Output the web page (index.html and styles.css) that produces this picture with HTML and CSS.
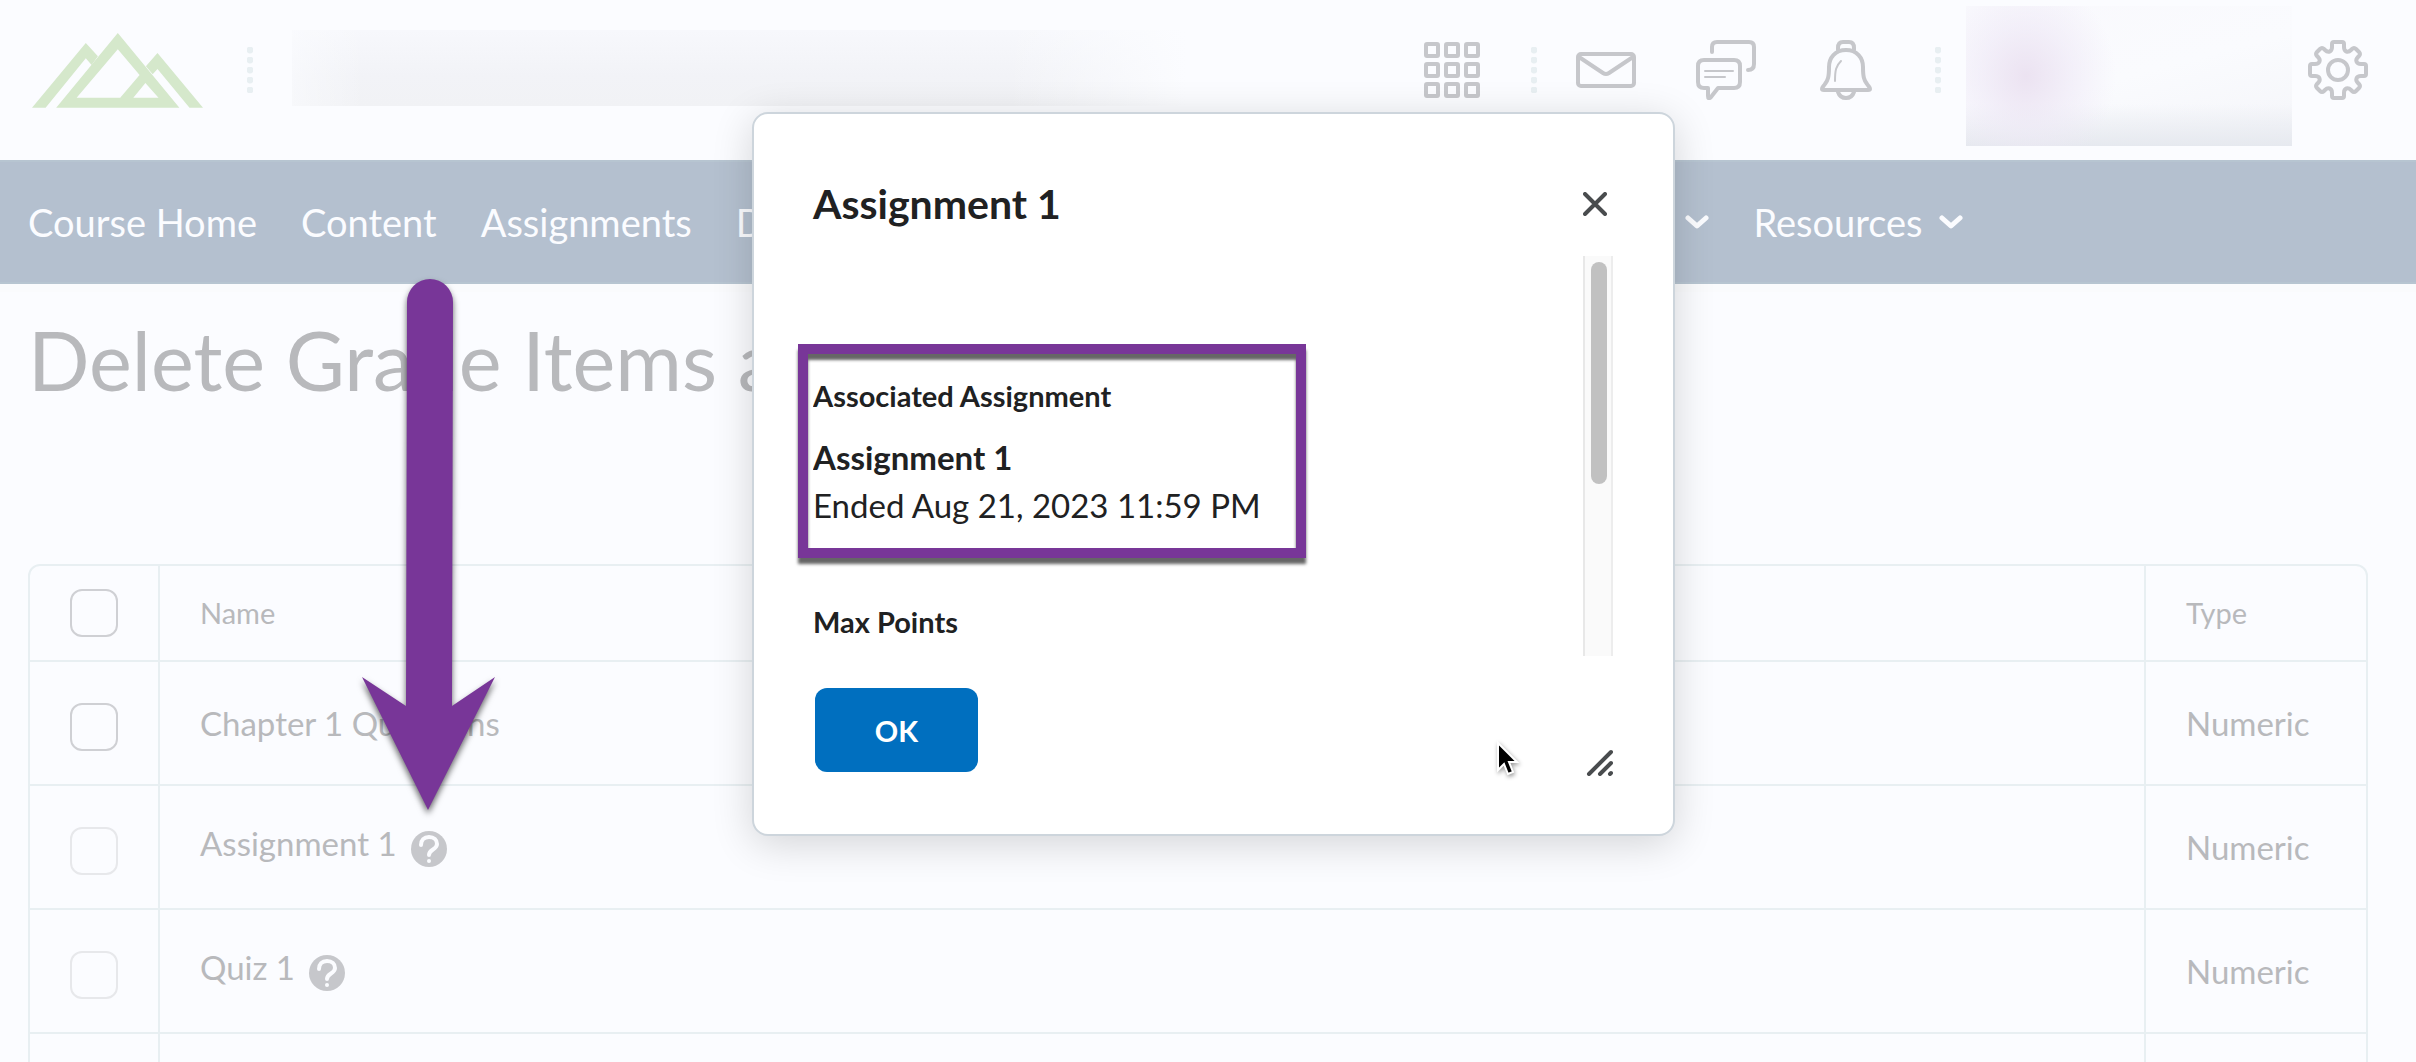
FILE: index.html
```html
<!DOCTYPE html>
<html lang="en">
<head>
    <meta charset="UTF-8">
    <meta name="viewport" content="width=device-width, initial-scale=1.0">
    <title>Delete Grade Items and Categories</title>
    <link rel="stylesheet" href="styles.css">
</head>
<body>
<div class="page">
    <header class="header">
        <a class="logo" href="#" aria-label="Home">
            <svg width="171" height="75" viewBox="32 32 171 75" fill="#d5e8cb">
                <path fill-rule="evenodd" d="M117.8 32L179.4 106.8H56.2ZM117.8 48.3L76.6 96.7H120.2L139.6 74ZM145.4 82L133.3 96.7H158.5Z"/>
                <path d="M32 106.8L85.8 42L97.9 55.3L91.6 64L85.8 57.3L45.6 106.8Z"/>
                <path d="M145.9 65.3L157.5 52L203 106.8H189.5L157.5 68L152.7 73.3Z"/>
            </svg>
        </a>
        <span class="divider divider-logo"></span>
        <div class="course-name"></div>

        <div class="tools">
            <button class="tool" aria-label="Courses">
                <svg width="56" height="56" viewBox="0 0 56 56">
                    <rect x="2" y="2" width="12" height="12" rx="1"/><rect x="22" y="2" width="12" height="12" rx="1"/><rect x="42" y="2" width="12" height="12" rx="1"/>
                    <rect x="2" y="22" width="12" height="12" rx="1"/><rect x="22" y="22" width="12" height="12" rx="1"/><rect x="42" y="22" width="12" height="12" rx="1"/>
                    <rect x="2" y="42" width="12" height="12" rx="1"/><rect x="22" y="42" width="12" height="12" rx="1"/><rect x="42" y="42" width="12" height="12" rx="1"/>
                </svg>
            </button>
            <span class="divider divider-apps"></span>
            <button class="tool" aria-label="Messages">
                <svg width="60" height="36" viewBox="0 0 60 36">
                    <rect x="2" y="2" width="56" height="32" rx="3"/>
                    <path d="M3 5L27 21Q30 23 33 21L57 5"/>
                </svg>
            </button>
            <button class="tool" aria-label="Discussions">
                <svg width="60" height="60" viewBox="0 0 60 60">
                    <path d="M16 12V7Q16 2 21 2H53Q58 2 58 7V24Q58 30 52 30"/>
                    <path d="M12 48H8Q2 48 2 42V26Q2 20 8 20H38Q44 20 44 26V42Q44 48 38 48H22L15 57Q12 60 12 56Z"/>
                    <path class="thin" d="M9 31H37M9 37H29"/>
                </svg>
            </button>
            <button class="tool" aria-label="Notifications">
                <svg width="52" height="60" viewBox="0 0 52 60">
                    <path d="M18 10V8Q18 2 23 2H29Q34 2 34 8V10"/>
                    <path d="M26 10C15 10 9 18 9 27C9 37 8 40 5 44C3 47 2 47 2 49Q2 50 4 50H48Q50 50 50 49C50 47 49 47 47 44C44 40 43 37 43 27C43 18 37 10 26 10Z"/>
                    <path d="M18 52Q20 58 26 58T34 52"/>
                    <path class="thin" d="M21 21C16 26 15 30 15 41"/>
                </svg>
            </button>
            <span class="divider"></span>
            <div class="user"></div>
            <button class="tool tool-admin" aria-label="Settings">
                <svg width="60" height="60" viewBox="0 0 60 60">
                    <path id="teeth" d="M30 2H34Q36 2 36 4V7C36 12 40 13 43 10L44 9Q46 7 48 9L51 12Q53 14 51 16L50 17C47 20 48 24 53 24H56Q58 24 58 26V30"/>
                    <use href="#teeth" transform="rotate(90 30 30)"/>
                    <use href="#teeth" transform="rotate(180 30 30)"/>
                    <use href="#teeth" transform="rotate(270 30 30)"/>
                    <circle cx="30" cy="30" r="10"/>
                </svg>
            </button>
        </div>
    </header>

    <nav class="navbar">
        <a href="#">Course Home</a>
        <a href="#">Content</a>
        <a href="#">Assignments</a>
        <a href="#">Discussions</a>
        <a class="menu menu-first" href="#" aria-label="More">
            <svg width="24" height="14" viewBox="0 0 24 14"><path d="M3 3L12 11L21 3"/></svg>
        </a>
        <a class="menu" href="#">Resources
            <svg width="24" height="14" viewBox="0 0 24 14"><path d="M3 3L12 11L21 3"/></svg>
        </a>
    </nav>

    <main class="main">
        <h1>Delete Grade Items and Categories</h1>
        <table class="grades">
            <thead>
                <tr>
                    <th class="check"><input type="checkbox" aria-label="Select all"></th>
                    <th>Name</th>
                    <th class="type">Type</th>
                </tr>
            </thead>
            <tbody>
                <tr>
                    <td class="check"><input type="checkbox" aria-label="Select Chapter 1 Questions"></td>
                    <td>Chapter 1 Questions</td>
                    <td>Numeric</td>
                </tr>
                <tr>
                    <td class="check"><input type="checkbox" aria-label="Select Assignment 1" disabled></td>
                    <td class="with-help">Assignment 1<button class="help" aria-label="Help"><svg width="36" height="36" viewBox="0 0 36 36"><circle cx="18" cy="18" r="18"/><path d="M10 14C10 9 13 6 18 6C23 6 26 9 26 13C26 19 18 18 18 24"/><circle class="dot" cx="18" cy="30" r="2"/></svg></button></td>
                    <td>Numeric</td>
                </tr>
                <tr>
                    <td class="check"><input type="checkbox" aria-label="Select Quiz 1" disabled></td>
                    <td class="with-help">Quiz 1<button class="help" aria-label="Help"><svg width="36" height="36" viewBox="0 0 36 36"><circle cx="18" cy="18" r="18"/><path d="M10 14C10 9 13 6 18 6C23 6 26 9 26 13C26 19 18 18 18 24"/><circle class="dot" cx="18" cy="30" r="2"/></svg></button></td>
                    <td>Numeric</td>
                </tr>
                <tr>
                    <td class="check"></td>
                    <td></td>
                    <td></td>
                </tr>
            </tbody>
        </table>
    </main>

    <div class="dialog" role="dialog" aria-labelledby="dialogTitle">
        <div class="dialog-header">
            <h2 id="dialogTitle">Assignment 1</h2>
            <button class="close" aria-label="Close">
                <svg width="24" height="24" viewBox="0 0 24 24"><path d="M2 2L22 22M22 2L2 22"/></svg>
            </button>
        </div>
        <div class="dialog-body">
            <div class="details">
                <h3>Associated Assignment</h3>
                <p><strong>Assignment 1</strong></p>
                <p>Ended Aug 21, 2023 11:59 PM</p>
                <h3 class="points">Max Points</h3>
            </div>
            <div class="scrollbar"><div class="thumb"></div></div>
        </div>
        <div class="dialog-footer">
            <button class="ok">OK</button>
            <svg class="resize" width="28" height="28" viewBox="0 0 28 28"><path d="M4 26L26 4M15 26L26 15M25 26L26 25"/></svg>
        </div>
        <div class="highlight"></div>
        <svg class="cursor" width="28" height="42" viewBox="0 0 28 42">
            <path d="M3 3V30L9 24L13 34L18 32L14 22H22Z"/>
        </svg>
    </div>

    <svg class="arrow" width="140" height="550" viewBox="0 0 140 550">
        <path d="M49 25A23 23 0 0 1 95 25L94 429L137 400L70 533L4 400L48 429Z"/>
    </svg>
</div>
</body>
</html>
```
FILE: styles.css
```css
* {
    box-sizing: border-box;
}

body {
    margin: 0;
    font-family: Lato, 'Open Sans', sans-serif;
    font-size: 33px;
    line-height: 48px;
    color: #b8b9bc;
    background-color: #fbfcff;
}

button {
    padding: 0;
    border: none;
    background: none;
    font-family: inherit;
    cursor: pointer;
}

svg {
    display: block;
    flex: none;
}

.page {
    position: relative;
    height: 100vh;
    overflow: hidden;
}

/* header */
.header {
    display: flex;
    align-items: center;
    height: 160px;
    padding: 0 48px 0 32px;
}

.logo {
    margin-bottom: 20px;
}

.divider {
    flex: none;
    width: 6px;
    height: 46px;
    margin: 0 25px 20px 29px;
    background: radial-gradient(circle at 3px 3px, #e8eff2 3px, transparent 4px) 0 0 / 6px 10px;
}

.divider-logo {
    margin: 0 39px 20px 44px;
}

.divider-apps {
    margin: 0 9px 20px 19px;
}

.course-name {
    flex: 0 1 894px;
    height: 76px;
    margin-bottom: 24px;
    background: linear-gradient(90deg, rgba(251, 252, 255, 0.6), transparent 8%, transparent 80%, #fbfcff), linear-gradient(#f7f8fc, #f2f3f7 60%, #f1f2f5);
}

.tools {
    display: flex;
    align-items: center;
    margin-left: auto;
}

.tool {
    display: flex;
    justify-content: center;
    width: 120px;
    margin-bottom: 20px;
}

.tool svg {
    fill: none;
    stroke: #c6c7cb;
    stroke-width: 4;
    stroke-linecap: round;
    stroke-linejoin: round;
}

.tool .thin {
    stroke-width: 2;
}

.tool-admin {
    width: 60px;
    margin-left: 16px;
}

.user {
    width: 326px;
    height: 140px;
    margin-bottom: 8px;
    background:
        radial-gradient(ellipse 90px 100px at 60px 70px, rgba(234, 224, 240, 0.9), rgba(238, 232, 246, 0.6) 50%, transparent),
        linear-gradient(transparent 70%, #e6e9ef),
        linear-gradient(165deg, #f9f9fd, #fafbfe 50%, #f4f5f9);
}

/* navbar */
.navbar {
    display: flex;
    align-items: center;
    gap: 44px;
    height: 124px;
    padding: 0 28px;
    border-top: 2px solid #b7c5d1;
    border-bottom: 2px solid #b7c5d1;
    background-color: #b4c0cf;
    box-shadow: 0 8px 0 #fafbfd;
    font-size: 38px;
    white-space: nowrap;
}

.navbar a {
    color: #fbfcff;
    text-decoration: none;
}

.menu {
    display: flex;
    align-items: center;
    gap: 16px;
}

.menu-first {
    margin-left: 711px;
}

.menu path {
    fill: none;
    stroke: #fbfcff;
    stroke-width: 5;
    stroke-linecap: round;
    stroke-linejoin: round;
}

/* grades table */
.main {
    padding: 28px 48px 0 28px;
}

.main h1 {
    margin: 0 0 156px;
    font-size: 81px;
    line-height: 96px;
    font-weight: 400;
    white-space: nowrap;
}

.grades {
    width: 100%;
    border: 2px solid #e8eff2;
    border-radius: 12px;
    border-spacing: 0;
    table-layout: fixed;
}

.grades th,
.grades td {
    height: 124px;
    padding: 0 40px;
    border-right: 2px solid #e8eff2;
    border-bottom: 2px solid #e8eff2;
    text-align: left;
}

.grades th {
    height: 96px;
    font-size: 29px;
    font-weight: 400;
}

.grades th:last-child,
.grades td:last-child {
    border-right: none;
}

.grades .check {
    width: 130px;
}

.grades td.check {
    padding-top: 8px;
}

.grades .type {
    width: 220px;
}

.grades td.with-help {
    padding-bottom: 8px;
}

.grades input {
    appearance: none;
    display: block;
    width: 48px;
    height: 48px;
    margin: 0;
    border: 2px solid #cfd0d4;
    border-radius: 12px;
}

.grades input:disabled {
    border-color: #e7e8eb;
}

.help {
    margin-left: 14px;
    vertical-align: -11px;
}

.help svg {
    fill: #c6c7cb;
}

.help path {
    fill: none;
    stroke: #fbfcff;
    stroke-width: 4;
    stroke-linecap: round;
}

.help .dot {
    fill: #fbfcff;
}

/* dialog */
.dialog {
    position: absolute;
    top: 112px;
    left: 752px;
    width: 923px;
    padding: 66px 60px 62px 59px;
    border: 2px solid #cdd5dc;
    border-radius: 16px;
    background-color: #fff;
    box-shadow: 0 8px 40px rgba(0, 0, 0, 0.16);
    color: #202122;
}

.dialog-header {
    display: flex;
    align-items: center;
    justify-content: space-between;
    margin-bottom: 28px;
}

.dialog-header h2 {
    margin: 0;
    font-size: 41px;
}

.close {
    margin-right: 6px;
}

.close path,
.resize path {
    fill: none;
    stroke: #494c4e;
    stroke-width: 4;
    stroke-linecap: round;
}

.dialog-body {
    display: flex;
    height: 400px;
    overflow: hidden;
}

.details {
    flex: 1;
    padding-top: 120px;
}

.details h3 {
    margin: 0 0 17px;
    font-size: 29px;
    line-height: 40px;
}

.details p {
    margin: 0;
}

.details .points {
    margin-top: 73px;
}

.scrollbar {
    width: 30px;
    padding: 6px;
    border-left: 2px solid #e8e8e8;
    border-right: 2px solid #ededed;
    background-color: #fafafa;
}

.thumb {
    width: 16px;
    height: 222px;
    border-radius: 8px;
    background-color: #c1c1c1;
}

.dialog-footer {
    display: flex;
    align-items: flex-end;
    justify-content: space-between;
    margin-top: 32px;
    padding-left: 2px;
}

.ok {
    width: 163px;
    height: 84px;
    border-radius: 12px;
    background-color: #006fbf;
    color: #fff;
    font-size: 29px;
    font-weight: 700;
}

.resize {
    margin-bottom: -4px;
}

/* annotations */
.highlight {
    position: absolute;
    top: 230px;
    left: 44px;
    width: 508px;
    height: 214px;
    border: 10px solid #783698;
    box-shadow: 0 6px 3px #666, inset 0 6px 3px #666;
}

.cursor {
    position: absolute;
    top: 626px;
    left: 741px;
    fill: #000;
    stroke: #fff;
    stroke-width: 2;
    filter: drop-shadow(1px 2px 2px rgba(0, 0, 0, 0.4));
}

.arrow {
    position: absolute;
    top: 277px;
    left: 358px;
    fill: #783698;
    filter: drop-shadow(0 4px 3px rgba(0, 0, 0, 0.6));
}
```
